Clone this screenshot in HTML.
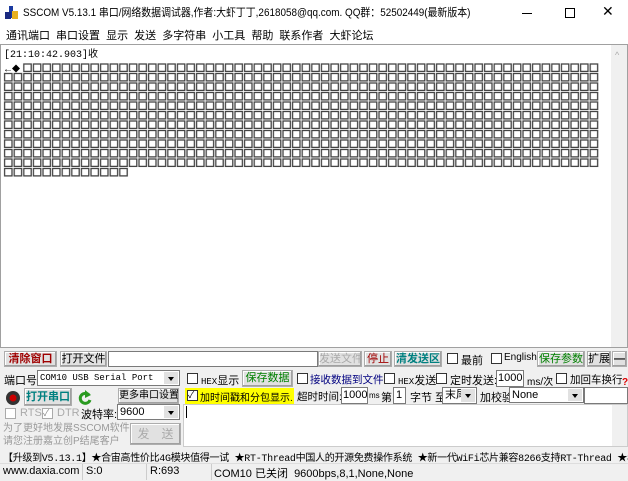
<!DOCTYPE html>
<html><head><meta charset="utf-8"><style>
*{box-sizing:border-box;margin:0;padding:0}
body{width:628px;height:480px;position:relative;overflow:hidden;background:#f0f0f0;font-family:"Liberation Sans","Noto Sans CJK SC",sans-serif;font-size:11px;color:#000}
.a{position:absolute;white-space:nowrap}
.btn{position:absolute;border:1px solid #adadad;background:#e1e1e1;text-align:center;line-height:14px;font-size:11px;box-shadow:inset -1px -1px 0 #a0a0a0,inset 1px 1px 0 #fff;white-space:nowrap;overflow:hidden}
.inp{position:absolute;background:#fff;border:1px solid #7a7a7a;font-size:11px;line-height:14px;padding-left:2px;white-space:nowrap;overflow:hidden}
.cb{position:absolute;width:11px;height:11px;border:1px solid #333;background:#fff}
.dd{position:absolute;right:1px;top:1px;width:14px;bottom:1px;background:#e1e1e1}
.dd:after{content:"";position:absolute;left:4px;top:5px;border:3.5px solid transparent;border-top:4px solid #000}
.mono{font-family:"Liberation Mono","Noto Sans CJK SC",monospace}
</style></head><body>
<div class="a" style="left:0;top:0;width:628px;height:44px;background:#fff"></div>
<svg class="a" style="left:5px;top:5px" width="14" height="14"><rect x="4" y="1" width="4" height="12" fill="#1a3aa0"/><rect x="0" y="7" width="6" height="7" fill="#1a2a80"/><rect x="7" y="6" width="6" height="8" fill="#e8b020"/></svg>
<div class="a" style="left:23px;top:4px;font-size:11px;transform:scaleX(0.9);transform-origin:0 0">SSCOM V5.13.1 串口/网络数据调试器,作者:大虾丁丁,2618058@qq.com. QQ群：52502449(最新版本)</div>
<div class="a" style="left:522px;top:13px;width:10px;height:1px;background:#000"></div>
<div class="a" style="left:565px;top:8px;width:10px;height:10px;border:1px solid #000"></div>
<div class="a" style="left:602px;top:3px;font-size:14px">✕</div>
<div class="a" style="left:6px;top:27px;word-spacing:3px;font-size:11px">通讯端口 串口设置 显示 发送 多字符串 小工具 帮助 联系作者 大虾论坛</div>
<div class="a" style="left:0;top:44px;width:628px;height:304px;background:#fff;border:1px solid #a0a0a0"></div>
<div class="a" style="left:611px;top:45px;width:16px;height:302px;background:#f0f0f0"></div>
<div class="a" style="left:615px;top:50px;font-size:9px;color:#aaa">^</div>
<div class="a mono" style="left:4px;top:50px;font-size:10px;line-height:12px">[21:10:42.903]收</div>
<svg class="a" style="left:0;top:63px" width="610" height="125">
<defs><pattern id="p" width="9.6" height="9.5" patternUnits="userSpaceOnUse" x="3.6" y="0"><rect x="1" y="1" width="7.4" height="7.4" fill="none" stroke="#444" stroke-width="1.3"/></pattern></defs>
<text x="3" y="9" font-size="10" font-family="Liberation Sans">←</text>
<path d="M16 1.5 L20 5.5 L16 9.5 L12 5.5Z" fill="#000"/>
<rect x="22.8" y="0" width="576" height="9.5" fill="url(#p)"/>
<rect x="3.6" y="9.5" width="595.2" height="95" fill="url(#p)"/>
<rect x="3.6" y="104.5" width="124.8" height="9.5" fill="url(#p)"/>
</svg>
<!-- row1 -->
<div class="btn" style="left:4px;top:351px;width:53px;height:16px;color:#a00000;font-weight:bold">清除窗口</div>
<div class="btn" style="left:60px;top:351px;width:47px;height:16px">打开文件</div>
<div class="inp" style="left:108px;top:351px;width:210px;height:16px"></div>
<div class="btn" style="left:318px;top:351px;width:44px;height:16px;color:#aaa">发送文件</div>
<div class="btn" style="left:364px;top:351px;width:28px;height:16px;color:#a00000">停止</div>
<div class="btn" style="left:394px;top:351px;width:48px;height:16px;color:#008080;font-weight:bold">清发送区</div>
<div class="cb" style="left:447px;top:353px"></div><div class="a" style="left:461px;top:352px">最前</div>
<div class="cb" style="left:491px;top:353px"></div><div class="a" style="left:504px;top:352px;font-size:10px">English</div>
<div class="btn" style="left:537px;top:351px;width:48px;height:16px;color:#008000">保存参数</div>
<div class="btn" style="left:587px;top:351px;width:24px;height:16px">扩展</div>
<div class="btn" style="left:612px;top:351px;width:15px;height:16px;font-weight:bold">—</div>
<!-- left panel -->
<div class="a" style="left:4px;top:372px">端口号</div>
<div class="inp mono" style="left:37px;top:370px;width:143px;height:16px;font-size:9px">COM10 USB Serial Port<div class="dd"></div></div>
<svg class="a" style="left:5px;top:390px" width="16" height="16"><circle cx="8" cy="8" r="7" fill="#333"/><circle cx="8" cy="8" r="3.5" fill="#c00"/></svg>
<div class="btn" style="left:24px;top:388px;width:48px;height:18px;color:#008080;font-weight:bold;line-height:16px">打开串口</div>
<svg class="a" style="left:77px;top:389px" width="16" height="18"><path d="M12 6 A5 5 0 1 0 13 11" fill="none" stroke="#2a9a20" stroke-width="3"/><path d="M8 1 L14 6 L8 9Z" fill="#2a9a20"/></svg>
<div class="btn" style="left:118px;top:388px;width:61px;height:16px;font-size:10px">更多串口设置</div>
<div class="cb" style="left:5px;top:408px;border-color:#aaa"></div><div class="a" style="left:20px;top:407px;color:#aaa">RTS</div>
<div class="cb" style="left:42px;top:408px;border-color:#aaa;font-size:9px;line-height:9px;color:#888">✓</div><div class="a" style="left:57px;top:407px;color:#aaa">DTR</div>
<div class="a" style="left:81px;top:406px">波特率:</div>
<div class="inp" style="left:117px;top:404px;width:63px;height:16px">9600<div class="dd"></div></div>
<div class="a" style="left:3px;top:422px;color:#999;line-height:13px;font-size:10px">为了更好地发展SSCOM软件<br>请您注册嘉立创P结尾客户</div>
<div class="btn" style="left:130px;top:423px;width:51px;height:22px;color:#aaa;line-height:20px;font-size:12px">发　送</div>
<!-- right panel -->
<div class="cb" style="left:187px;top:373px"></div><div class="a" style="left:201px;top:372px"><span class="mono" style="font-size:9px">HEX</span>显示</div>
<div class="btn" style="left:242px;top:370px;width:51px;height:17px;color:#008000">保存数据</div>
<div class="cb" style="left:297px;top:373px"></div><div class="a" style="left:310px;top:372px;color:#000080;font-size:10.5px">接收数据到文件</div>
<div class="cb" style="left:384px;top:373px"></div><div class="a" style="left:398px;top:372px"><span class="mono" style="font-size:9px">HEX</span>发送</div>
<div class="cb" style="left:436px;top:373px"></div><div class="a" style="left:450px;top:372px">定时发送:</div>
<div class="inp" style="left:496px;top:370px;width:28px;height:17px;padding-left:1px">1000</div>
<div class="a" style="left:527px;top:373px;font-size:10px">ms/次</div>
<div class="cb" style="left:556px;top:373px"></div><div class="a" style="left:570px;top:372px;font-size:10.5px">加回车换行</div>
<div class="a" style="left:622px;top:377px;color:#d00;font-weight:bold;font-size:10px">?</div>
<div class="a" style="left:185px;top:388px;width:109px;height:16px;background:#ffff00"></div>
<div class="cb" style="left:187px;top:390px;font-size:9px;line-height:9px">✓</div><div class="a" style="left:200px;top:389px;font-size:10px">加时间戳和分包显示.</div>
<div class="a" style="left:297px;top:389px;font-size:10.5px">超时时间:</div>
<div class="inp" style="left:341px;top:387px;width:27px;height:17px;padding-left:1px">1000</div>
<div class="a" style="left:369px;top:391px;font-size:8px">ms</div>
<div class="a" style="left:381px;top:389px">第</div>
<div class="inp" style="left:393px;top:387px;width:13px;height:17px">1</div>
<div class="a" style="left:410px;top:389px">字节 至</div>
<div class="inp" style="left:442px;top:387px;width:35px;height:17px">末尾<div class="dd"></div></div>
<div class="a" style="left:480px;top:389px">加校验</div>
<div class="inp" style="left:509px;top:387px;width:75px;height:16px">None<div class="dd"></div></div>
<div class="inp" style="left:584px;top:387px;width:44px;height:17px"></div>
<div class="inp" style="left:183px;top:404px;width:445px;height:43px;border-color:#ccc"></div>
<div class="a" style="left:186px;top:406px;width:1px;height:12px;background:#000"></div>
<div class="a" style="left:612px;top:405px;width:15px;height:41px;background:#f0f0f0"></div>
<!-- ticker -->
<div class="a" style="left:0;top:447px;width:628px;height:16px;overflow:hidden"><div class="a mono" style="left:3px;top:2px;font-size:10px;letter-spacing:-0.3px">【升级到V5.13.1】★合宙高性价比4G模块值得一试 ★RT-Thread中国人的开源免费操作系统 ★新一代WiFi芯片兼容8266支持RT-Thread ★8KM远距</div></div>
<!-- status -->
<div class="a" style="left:0;top:463px;width:628px;height:17px;background:#f0f0f0;border-top:1px solid #ddd"></div>
<div class="a" style="left:3px;top:465px">www.daxia.com</div>
<div class="a" style="left:82px;top:464px;width:1px;height:16px;background:#ccc"></div>
<div class="a" style="left:86px;top:465px">S:0</div>
<div class="a" style="left:146px;top:464px;width:1px;height:16px;background:#ccc"></div>
<div class="a" style="left:150px;top:465px">R:693</div>
<div class="a" style="left:211px;top:464px;width:1px;height:16px;background:#ccc"></div>
<div class="a" style="left:214px;top:465px">COM10 已关闭&nbsp; 9600bps,8,1,None,None</div>
</body></html>
